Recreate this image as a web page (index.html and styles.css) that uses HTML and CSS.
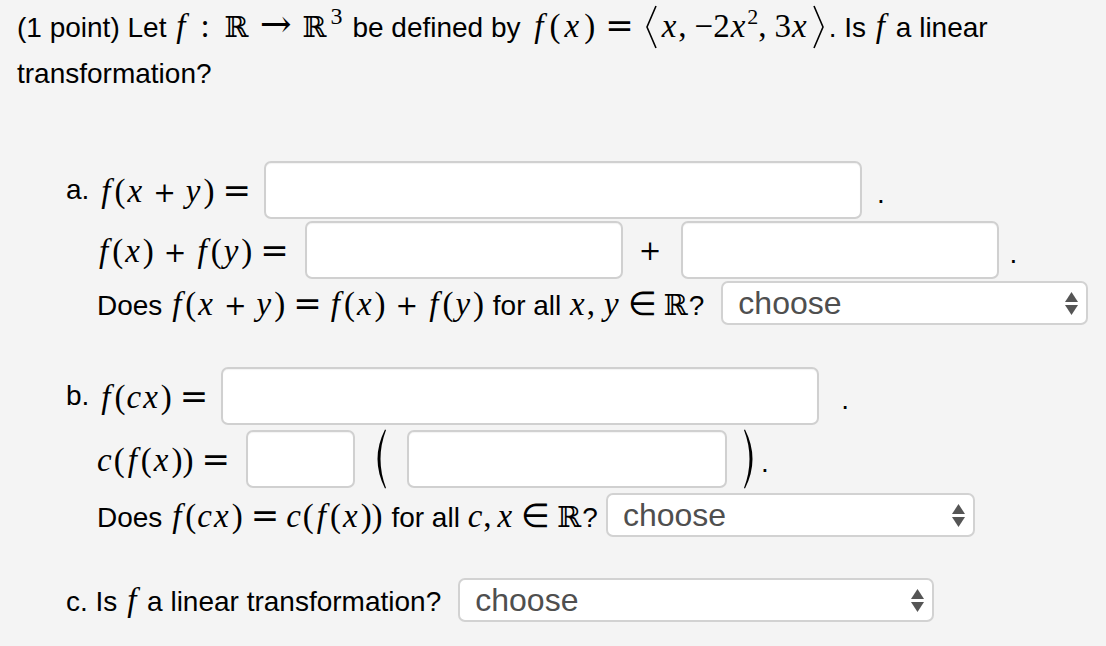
FILE: index.html
```html
<!DOCTYPE html>
<html>
<head>
<meta charset="utf-8">
<link rel="stylesheet" href="styles.css">
</head>
<body>
<div class="page">
  <p class="intro">(1 point) Let <span class="m"><i class="f">f</i><span class="rel colon">:</span><span class="bb wide">ℝ</span><span class="rel arrow">→</span><span class="bb wide">ℝ</span><sup class="sup">3</sup></span> be defined by <span class="m"><i class="f lead">f</i><span class="p wide">(</span><i>x</i><span class="p wide">)</span><span class="rel eq">=</span><svg class="angle" width="14" height="44" viewBox="0 0 14 44"><polyline points="12,1 3,22 12,43" fill="none" stroke="#000" stroke-width="1.6"/></svg><i>x</i>,<span class="thin"></span>−2<i>x</i><sup class="sup2">2</sup>,<span class="thin"></span>3<i>x</i><svg class="angle" width="14" height="44" viewBox="0 0 14 44"><polyline points="2,1 11,22 2,43" fill="none" stroke="#000" stroke-width="1.6"/></svg></span>. Is <span class="m"><i class="f">f</i></span> a linear<br>transformation?</p>

  <div class="part part-a">
    <div class="row">
      <span class="lbl">a.</span>
      <span class="m"><i class="f">f</i><span class="p">(</span><i>x</i><span class="op">+</span><i>y</i><span class="p">)</span><span class="rel eq end">=</span></span>
      <div class="input w598 gap13"></div>
      <span class="dot">.</span>
    </div>
    <div class="row sub">
      <span class="m"><i class="f">f</i><span class="p">(</span><i>x</i><span class="p">)</span><span class="op">+</span><i class="f">f</i><span class="p">(</span><i>y</i><span class="p">)</span><span class="rel eq end">=</span></span>
      <div class="input w318 gap16"></div>
      <span class="plus">+</span>
      <div class="input w318"></div>
      <span class="dot2">.</span>
    </div>
    <div class="row sub">
      <span>Does <span class="m"><i class="f">f</i><span class="p">(</span><i>x</i><span class="op">+</span><i>y</i><span class="p">)</span><span class="rel eq">=</span><i class="f">f</i><span class="p">(</span><i>x</i><span class="p">)</span><span class="op">+</span><i class="f">f</i><span class="p">(</span><i>y</i><span class="p">)</span></span> for all <span class="m"><i>x</i>,<span class="thin"></span><i>y</i><span class="rel in">∈</span><span class="bb">ℝ</span></span>?</span>
      <div class="select w367 gap17"><span>choose</span><svg class="arrows" width="13" height="23" viewBox="0 0 13 23"><polygon points="6.5,0 13,10 0,10" fill="#555"/><polygon points="0,13 13,13 6.5,23" fill="#555"/></svg></div>
    </div>
  </div>

  <div class="part part-b">
    <div class="row">
      <span class="lbl">b.</span>
      <span class="m"><i class="f">f</i><span class="p">(</span><i class="c">c</i><i>x</i><span class="p">)</span><span class="rel eq end">=</span></span>
      <div class="input w598 gap13"></div>
      <span class="dot3">.</span>
    </div>
    <div class="row sub tall">
      <span class="m"><i class="c">c</i><span class="p">(</span><i class="f">f</i><span class="p">(</span><i>x</i><span class="p">))</span><span class="rel eq end">=</span></span>
      <div class="input w109 gap16"></div>
      <svg class="paren lp" width="15" height="60" viewBox="0 0 15 60"><path d="M13 0.5 Q-2 30 13 59.5 L14 59 Q3 30 14 1 Z" fill="#000"/></svg>
      <div class="input w320"></div>
      <svg class="paren rp" width="15" height="60" viewBox="0 0 15 60"><path d="M2 0.5 Q17 30 2 59.5 L1 59 Q12 30 1 1 Z" fill="#000"/></svg>
      <span class="dot4">.</span>
    </div>
    <div class="row sub">
      <span>Does <span class="m"><i class="f">f</i><span class="p">(</span><i class="c">c</i><i>x</i><span class="p">)</span><span class="rel eq">=</span><i class="c">c</i><span class="p">(</span><i class="f">f</i><span class="p">(</span><i>x</i><span class="p">))</span></span> for all <span class="m"><i class="c">c</i>,<span class="thin narrow"></span><i>x</i><span class="rel in">∈</span><span class="bb">ℝ</span></span>?</span>
      <div class="select w369 gap8"><span>choose</span><svg class="arrows" width="13" height="23" viewBox="0 0 13 23"><polygon points="6.5,0 13,10 0,10" fill="#555"/><polygon points="0,13 13,13 6.5,23" fill="#555"/></svg></div>
    </div>
  </div>

  <div class="part part-c">
    <div class="row">
      <span>c. Is <span class="m"><i class="f">f</i></span> a linear transformation?</span>
      <div class="select w476 gap-c"><span>choose</span><svg class="arrows" width="13" height="23" viewBox="0 0 13 23"><polygon points="6.5,0 13,10 0,10" fill="#555"/><polygon points="0,13 13,13 6.5,23" fill="#555"/></svg></div>
    </div>
  </div>
</div>
</body>
</html>
```

FILE: styles.css
```css
html, body {
  margin: 0;
  background: #f4f4f4;
}
body {
  font-family: "Liberation Sans", Arial, sans-serif;
  font-size: 28px;
  color: #000;
}
.page {
  padding: 5px 0 0 17px;
}
.intro {
  margin: 0;
  line-height: 46px;
}
.intro .m {
  line-height: 0;
}
.m {
  font-family: "Liberation Serif", "Times New Roman", serif;
  font-size: 33px;
}
.m i {
  font-style: italic;
  margin: 0 2px 0 1px;
}
.m i.f {
  margin: 0 3px 0 2px;
}
.m i.f.lead {
  margin-left: 6px;
}
.m i.c {
  margin: 0 1px 0 0;
}
.m .p {
  margin: 0 1px;
}
.m .p.wide {
  margin: 0 3px;
}
.bb {
  font-family: "DejaVu Serif", serif;
  font-size: 29px;
  margin-right: 1px;
}
.bb.wide {
  margin: 0 3px;
}
.rel {
  margin: 0 10px;
}
.rel.colon {
  margin: 0 12px;
}
.rel.arrow {
  font-family: "DejaVu Serif", serif;
  font-size: 38px;
  margin: 0 8px;
}
.rel.eq {
  font-family: "DejaVu Serif", serif;
  font-size: 34px;
  margin: 0 7px;
}
.rel.eq.end {
  margin-right: 0;
}
.rel.in {
  margin: 0 7px;
}
.op {
  font-family: "DejaVu Serif", serif;
  font-size: 27px;
  margin: 0 9px;
}
.thin {
  display: inline-block;
  width: 8px;
}
.thin.narrow {
  width: 5px;
}
.sup {
  font-size: 24px;
  vertical-align: 13px;
  margin: 0 2px 0 1px;
  line-height: 0;
}
.sup2 {
  font-size: 22px;
  vertical-align: 13px;
  line-height: 0;
}
.angle {
  vertical-align: -12px;
  margin: 0 3px;
}
.part {
  margin-left: 49px;
  display: flex;
  flex-direction: column;
  gap: 2px;
}
.part-a { margin-top: 64px; }
.part-b { margin-top: 42px; }
.part-c { margin-top: 41px; }
.row {
  display: flex;
  align-items: center;
  white-space: pre;
}
.row.sub {
  padding-left: 31px;
}
.row.tall {
  min-height: 64px;
}
.lbl {
  margin-right: 10px;
}
.input {
  height: 58px;
  box-sizing: border-box;
  border: 2px solid #d0d0d0;
  border-radius: 7px;
  background: #fff;
  box-shadow: inset 0 1px 1px rgba(0, 0, 0, 0.05);
  flex: none;
}
.select {
  height: 44px;
  box-sizing: border-box;
  border: 2px solid #d2d2d2;
  border-radius: 7px;
  background: #fff;
  display: flex;
  align-items: center;
  justify-content: space-between;
  padding: 0 8px 0 15px;
  color: #4f4f4f;
  font-size: 32px;
  flex: none;
}
.arrows { display: block; }
.w598 { width: 598px; }
.w318 { width: 318px; }
.w320 { width: 320px; }
.w109 { width: 109px; }
.w367 { width: 367px; }
.w369 { width: 369px; }
.w476 { width: 476px; }
.gap8 { margin-left: 8px; }
.gap13 { margin-left: 13px; }
.gap16 { margin-left: 16px; }
.gap17 { margin-left: 17px; }
.gap-c { margin-left: 17px; }
.dot {
  margin-left: 15px;
  transform: translateY(4px);
}
.dot2 {
  margin-left: 10px;
  transform: translateY(4px);
}
.dot3 {
  margin-left: 22px;
  transform: translateY(4px);
}
.dot4 {
  margin-left: 3px;
  transform: translateY(4px);
}
.plus {
  margin: 0 20px 0 16px;
  font-family: "DejaVu Serif", serif;
  font-size: 27px;
}
.paren {
  display: block;
  flex: none;
}
.lp { margin: 0 20px 0 17px; }
.rp { margin-left: 16px; }
```
